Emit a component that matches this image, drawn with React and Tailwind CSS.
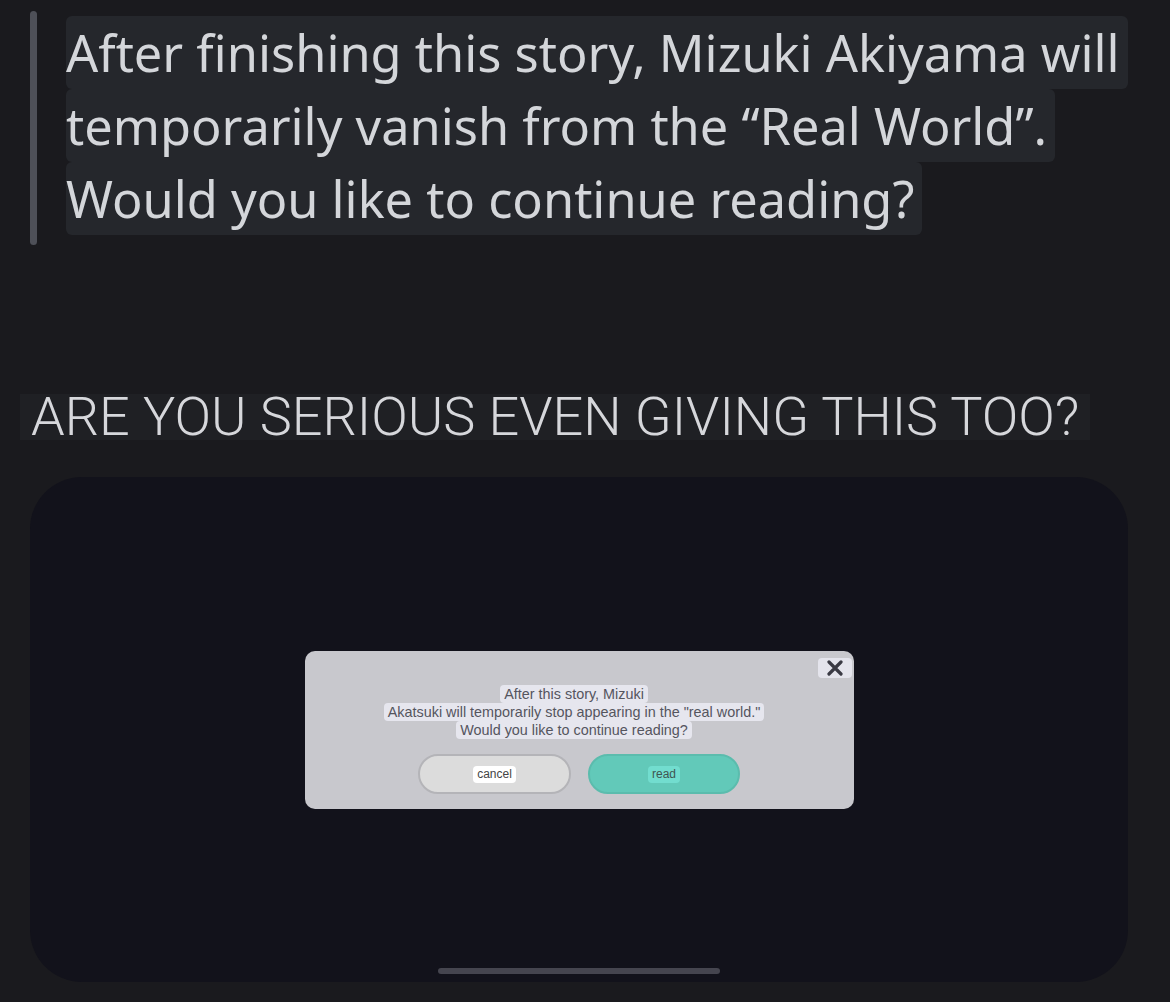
export default function App() {
  const lines = [
    { text: 'After finishing this story, Mizuki Akiyama will' },
    { text: 'temporarily vanish from the \u201CReal World\u201D.' },
    { text: 'Would you like to continue reading?' },
  ]

  return (
    <div className="h-[1002px] w-[1170px] overflow-hidden bg-[#1a1a1e] font-['Noto_Sans',sans-serif]">
      {/* quoted message */}
      <div className="flex pl-[30px] pt-[11px]">
        <div className="w-[7px] shrink-0 rounded-sm bg-[#4e5058]" />
        <div className="flex flex-col items-start pt-[5px] pb-[10px] pl-[29px]">
          {lines.map((l) => (
            <div
              key={l.text}
              className="whitespace-nowrap rounded-md bg-[#25272c] pr-2 text-[50.5px] leading-[73px] font-normal text-[#d4d6da]"
            >
              {l.text}
            </div>
          ))}
        </div>
      </div>

      {/* heading */}
      <div className="pl-[20px] pt-[149px]">
        <span className="inline-block whitespace-nowrap bg-[#1f2024] px-[11px] font-['Roboto',sans-serif] text-[54px] leading-[46px] font-light text-[#d6d7db]">
          ARE YOU SERIOUS EVEN GIVING THIS TOO?
        </span>
      </div>

      {/* video card */}
      <div className="mx-[30px] mt-[36px] flex h-[505px] w-[1098px] flex-col items-center rounded-[52px] bg-[#12121b]">
        <div className="mt-[174px] flex h-[158px] w-[549px] flex-col items-center rounded-[10px] bg-[#c8c8cd] font-['Liberation_Sans',Arial,sans-serif]">
          <div className="flex w-full justify-end pr-[2px] pt-[7px]">
            <div className="flex h-[20px] w-[34px] items-center justify-center rounded-sm bg-[#e4e4ec]">
              <svg width="16" height="16" viewBox="0 0 16 16">
                <path d="M2 2L14 14M14 2L2 14" stroke="#3a3a44" strokeWidth="3.2" strokeLinecap="round" />
              </svg>
            </div>
          </div>
          <div className="mt-[7px] flex flex-col items-center pr-[10px] text-[14.4px] leading-[18px] text-[#55555e]">
            <span className="rounded-sm bg-[#e6e6ee] px-[4px]">After this story, Mizuki</span>
            <span className="rounded-sm bg-[#e6e6ee] px-[4px]">
              Akatsuki will temporarily stop appearing in the "real world."
            </span>
            <span className="rounded-sm bg-[#e6e6ee] px-[4px]">Would you like to continue reading?</span>
          </div>
          <div className="mt-[15px] flex gap-[17px]">
            <div className="flex h-[40px] w-[153px] items-center justify-center rounded-full border-2 border-[#b4b4b8] bg-[#dcdcdc]">
              <span className="rounded-sm bg-white px-[4px] text-[12px] leading-[17px] text-[#444]">cancel</span>
            </div>
            <div className="flex h-[40px] w-[152px] items-center justify-center rounded-full border-2 border-[#5bbcad] bg-[#62c9b9]">
              <span className="rounded-sm bg-[#72ddcf] px-[4px] text-[12px] leading-[17px] text-[#3f5552]">read</span>
            </div>
          </div>
        </div>
        <div className="mt-auto mb-[8px] h-[6px] w-[282px] rounded-full bg-[#45454f]" />
      </div>
    </div>
  )
}
